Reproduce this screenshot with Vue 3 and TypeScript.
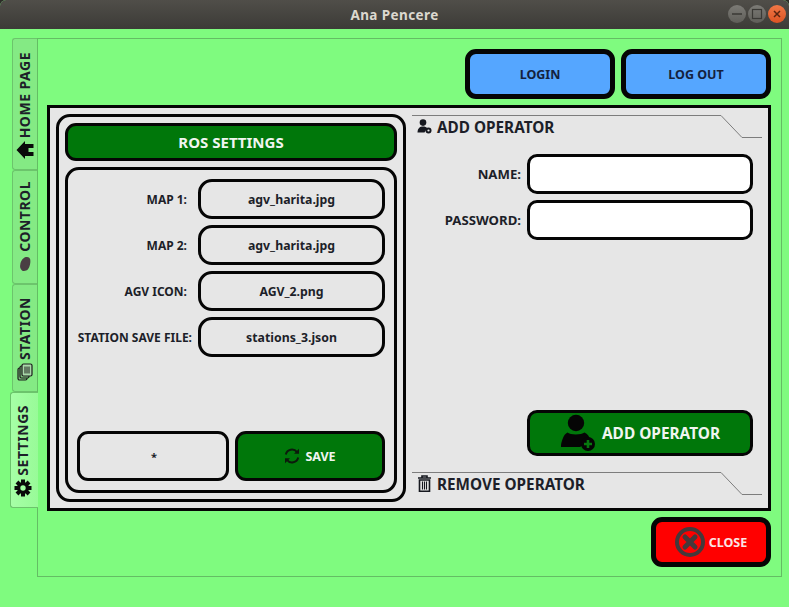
<template>
  <div class="window">
    <header class="titlebar">
      <span class="title">Ana Pencere</span>
      <div class="controls">
        <span class="ctl">
          <svg width="18" height="18" viewBox="0 0 18 18"><path d="M4 9h10" stroke="#3a3935" stroke-width="1.5" /></svg>
        </span>
        <span class="ctl">
          <svg width="18" height="18" viewBox="0 0 18 18"><rect x="4.5" y="4.5" width="9" height="9" fill="none" stroke="#3a3935" stroke-width="1.2" /></svg>
        </span>
        <span class="ctl ctl-close">
          <svg width="18" height="18" viewBox="0 0 18 18"><path d="M6 6l6 6M12 6l-6 6" stroke="#5a2410" stroke-width="1.5" /></svg>
        </span>
      </div>
    </header>

    <div class="content">
      <nav class="tabs">
        <div
          v-for="tab in tabs"
          :key="tab.label"
          class="tab"
          :class="{ active: tab.active }"
          :style="{ height: tab.height + 'px' }"
        >
          <span class="tab-label">{{ tab.label }}</span>
          <span class="tab-icon">
            <svg v-if="tab.icon === 'home'" width="18" height="18" viewBox="0 0 18 18">
              <path d="M9 0.5L18 9h-3v8.5h-4v-5H7v5H3V9H0z" fill="#0a0a0a" transform="rotate(-90 9 9)" />
            </svg>
            <svg v-else-if="tab.icon === 'control'" width="18" height="18" viewBox="0 0 18 18">
              <path d="M10 2c2.600-.4 4 .8 4.300 2.800.4 2.700-.4 7.200-2.300 9.400-1.300 1.500-4.200 2.300-6 1.200C4 14 3.800 11.500 4.300 9.300 4.900 6 7 2.500 10 2z" fill="#4a3f43" />
            </svg>
            <svg v-else-if="tab.icon === 'station'" width="18" height="18" viewBox="0 0 18 18">
              <g fill="#7fc47f" stroke="#1c1c1c" stroke-width="1.2" transform="rotate(-90 9 9)">
                <rect x="1" y="2" width="12" height="9" rx="1.500" />
                <rect x="3" y="4" width="12" height="9" rx="1.500" />
                <rect x="5" y="6" width="12" height="10" rx="1.500" fill="#a9d8a9" />
                <path d="M7.500 9h7M7.500 11h7M7.500 13h7" stroke-width="1" />
              </g>
            </svg>
            <svg v-else width="18" height="18" viewBox="0 0 18 18">
              <g fill="#0a0a0a">
                <circle cx="9" cy="9" r="6" />
                <rect v-for="a in [0, 45, 90, 135, 180, 225, 270, 315]" :key="a" x="7" y="0.5" width="4" height="4" :transform="`rotate(${a} 9 9)`" />
              </g>
              <circle cx="9" cy="9" r="2.700" fill="#a0ffa0" />
            </svg>
          </span>
        </div>
      </nav>

      <main class="pane">
        <div class="top-actions">
          <button class="btn blue">LOGIN</button>
          <button class="btn blue">LOG OUT</button>
        </div>

        <section class="frame">
          <div class="ros-group">
            <div class="ros-title">ROS SETTINGS</div>
            <div class="ros-panel">
              <div v-for="row in rows" :key="row.label" class="ros-row">
                <span class="ros-label" :class="{ wide: row.wide }">{{ row.label }}</span>
                <div class="ros-field">{{ row.value }}</div>
              </div>
              <div class="ros-actions">
                <div class="ros-field star">*</div>
                <button class="save">
                  <svg width="16" height="16" viewBox="0 0 16 16">
                    <g fill="none" stroke="#0c1a0c" stroke-width="2">
                      <path d="M1.800 6.500A6.300 6.300 0 0 1 13 4.200" />
                      <path d="M14.200 9.500A6.300 6.300 0 0 1 3 11.800" />
                    </g>
                    <path d="M15 0.800v5h-5zM1 15.200v-5h5z" fill="#0c1a0c" />
                  </svg>
                  SAVE
                </button>
              </div>
            </div>
          </div>

          <div class="operators">
            <div class="section-head">
              <svg class="head-line" width="350" height="23" viewBox="0 0 350 23">
                <path d="M0 .5H309L330 22.500H350" fill="none" stroke="#7d7d7d" />
              </svg>
              <svg width="15" height="15" viewBox="0 0 15 15">
                <circle cx="6" cy="3.600" r="3.300" fill="#16181f" />
                <path d="M0.500 13C1 8.600 3 7.400 6 7.400c2 0 3.400.5 4.300 1.600L7.500 13.500H.500z" fill="#16181f" />
                <circle cx="11.500" cy="11.500" r="3" fill="#16181f" />
                <circle cx="11.500" cy="11.500" r="1.100" fill="#e6e6e6" />
              </svg>
              <span>ADD OPERATOR</span>
            </div>

            <div class="op-form">
              <label class="op-row">
                <span class="op-label">NAME:</span>
                <input class="op-input" type="text" />
              </label>
              <label class="op-row">
                <span class="op-label">PASSWORD:</span>
                <input class="op-input" type="password" />
              </label>
            </div>

            <button class="add-btn">
              <svg width="36" height="38" viewBox="0 0 36 38">
                <circle cx="16" cy="9" r="8.200" fill="#050505" />
                <path d="M1 31c1-5 2.500-10.500 6.500-12.500 2.500 2.500 14 2.500 17 0 3 1.500 5 4 6 8L20 33H1z" fill="#050505" />
                <circle cx="28" cy="30" r="7" fill="#050505" />
                <path d="M28 26v8M24 30h8" stroke="#067a0e" stroke-width="2.600" />
              </svg>
              <span>ADD OPERATOR</span>
            </button>

            <div class="section-head last">
              <svg class="head-line" width="350" height="23" viewBox="0 0 350 23">
                <path d="M0 .5H309L330 22.500H350" fill="none" stroke="#7d7d7d" />
              </svg>
              <svg width="15" height="17" viewBox="0 0 15 17">
                <path d="M5 2.500V1h5v1.500M1 3h13" fill="none" stroke="#16181f" stroke-width="1.600" />
                <path d="M2.500 5h10v11.200h-10z" fill="none" stroke="#16181f" stroke-width="1.600" />
                <path d="M5.500 6.500v8M7.500 6.500v8M9.500 6.500v8" stroke="#16181f" stroke-width="1.100" />
              </svg>
              <span>REMOVE OPERATOR</span>
            </div>
          </div>
        </section>

        <div class="bottom-actions">
          <button class="btn red">
            <svg width="30" height="30" viewBox="0 0 30 30">
              <circle cx="15" cy="15" r="13" fill="none" stroke="#45383a" stroke-width="4" />
              <path d="M10 10l10 10M20 10L10 20" stroke="#45383a" stroke-width="5" stroke-linecap="round" />
            </svg>
            <span>CLOSE</span>
          </button>
        </div>
      </main>
    </div>
  </div>
</template>

<script setup lang="ts">
type Tab = {
  label: string;
  icon: "home" | "control" | "station" | "settings";
  height: number;
  active?: boolean;
};

type Row = {
  label: string;
  value: string;
  wide?: boolean;
};

const tabs: Tab[] = [
  { label: "HOME PAGE", icon: "home", height: 132 },
  { label: "CONTROL", icon: "control", height: 114 },
  { label: "STATION", icon: "station", height: 108 },
  { label: "SETTINGS", icon: "settings", height: 116, active: true },
];

const rows: Row[] = [
  { label: "MAP 1:", value: "agv_harita.jpg" },
  { label: "MAP 2:", value: "agv_harita.jpg" },
  { label: "AGV ICON:", value: "AGV_2.png" },
  { label: "STATION SAVE FILE:", value: "stations_3.json", wide: true },
];
</script>

<style>
html,
body {
  margin: 0;
  background: #2c2b28;
}
</style>

<style scoped>
.window {
  width: 789px;
  height: 607px;
  display: flex;
  flex-direction: column;
  overflow: hidden;
  border-radius: 6px 6px 0 0;
  background: #7ffb7f;
  color: #1d1f29;
  font-family: "Noto Sans", "Open Sans", sans-serif;
  font-weight: 700;
  font-size: 12.300px;
}

.titlebar {
  height: 29px;
  flex: none;
  position: relative;
  display: flex;
  align-items: center;
  justify-content: center;
  background: linear-gradient(#504e49, #3c3b37);
}

.title {
  color: #dcd8cf;
  font-size: 13.500px;
  letter-spacing: 0.4px;
}

.controls {
  position: absolute;
  right: 3px;
  top: 5px;
  display: flex;
  gap: 2px;
}

.ctl {
  width: 18px;
  height: 18px;
  border-radius: 50%;
  background: linear-gradient(#7c7b76, #5f5e59);
}

.ctl svg {
  display: block;
}

.ctl-close {
  background: linear-gradient(#f07746, #dc5424);
}

.content {
  flex: 1;
  display: flex;
  padding: 9px 7px 30px 10px;
  min-height: 0;
}

.tabs {
  width: 27px;
  flex: none;
  display: flex;
  flex-direction: column;
  position: relative;
  z-index: 1;
}

.tab {
  box-sizing: border-box;
  width: 25px;
  margin-left: 2px;
  display: flex;
  flex-direction: column;
  align-items: center;
  justify-content: flex-end;
  gap: 3px;
  padding-bottom: 10px;
  padding-right: 1px;
  background: #84ea84;
  border: 1px solid #6cc46c;
  border-right: none;
  border-radius: 3px 0 0 3px;
}

.tab.active {
  width: 28px;
  margin-left: 0;
  padding-right: 3px;
  background: linear-gradient(90deg, #a6ffa6, #98fb98);
}

.tab-label {
  writing-mode: vertical-rl;
  transform: rotate(180deg);
  font-size: 14px;
  letter-spacing: 0.5px;
  line-height: 1;
  white-space: nowrap;
}

.tab-icon {
  height: 18px;
}

.tab-icon svg {
  display: block;
}

.pane {
  flex: 1;
  box-sizing: border-box;
  border: 1px solid #64bd64;
  padding: 10px 10px 9px 9px;
  display: flex;
  flex-direction: column;
  gap: 6px;
}

.top-actions,
.bottom-actions {
  height: 50px;
  flex: none;
  display: flex;
  justify-content: flex-end;
  gap: 6px;
}

.btn {
  box-sizing: border-box;
  width: 150px;
  height: 50px;
  border: 5px solid #050505;
  border-radius: 11px;
  font: inherit;
  font-size: 12.500px;
  color: #14213d;
  padding: 0;
}

.blue {
  background: #55a6ff;
}

.red {
  width: 120px;
  background: #ff0000;
  color: #fbe4e4;
  display: flex;
  align-items: center;
  justify-content: center;
  gap: 4px;
}

.frame {
  height: 406px;
  flex: none;
  box-sizing: border-box;
  border: 3px solid #050505;
  background: #e6e6e6;
  padding: 6px;
  display: flex;
  gap: 6px;
}

.ros-group {
  width: 350px;
  box-sizing: border-box;
  border: 3px solid #050505;
  border-radius: 14px;
  padding: 6px;
  display: flex;
  flex-direction: column;
  gap: 6px;
}

.ros-title {
  height: 38px;
  flex: none;
  box-sizing: border-box;
  border: 3px solid #050505;
  border-radius: 11px;
  background: #00770a;
  color: #f0f5f0;
  font-size: 15px;
  display: flex;
  align-items: center;
  justify-content: center;
}

.ros-panel {
  flex: 1;
  box-sizing: border-box;
  border: 3px solid #050505;
  border-radius: 14px;
  padding: 9px;
  display: flex;
  flex-direction: column;
  gap: 6px;
}

.ros-row {
  display: grid;
  grid-template-columns: 115px 187px;
  column-gap: 6px;
  align-items: center;
}

.ros-label {
  text-align: right;
  padding-right: 5px;
  white-space: nowrap;
  font-size: 12px;
}

.ros-label.wide {
  padding-right: 0;
}

.ros-field {
  box-sizing: border-box;
  height: 40px;
  border: 3px solid #050505;
  border-radius: 14px;
  display: flex;
  align-items: center;
  justify-content: center;
}

.ros-actions {
  margin-top: auto;
  display: grid;
  grid-template-columns: 152px 150px;
  column-gap: 6px;
}

.star {
  height: 50px;
  border-radius: 11px;
  font-size: 11px;
  padding-left: 2px;
}

.save {
  height: 50px;
  box-sizing: border-box;
  border: 3px solid #050505;
  border-radius: 11px;
  background: #00770a;
  color: #f0f5f0;
  font: inherit;
  font-size: 12.500px;
  display: flex;
  align-items: center;
  justify-content: center;
  gap: 5px;
  padding: 0;
}

.operators {
  width: 350px;
  display: flex;
  flex-direction: column;
  padding-top: 1px;
  padding-bottom: 7px;
}

.section-head {
  position: relative;
  height: 23px;
  flex: none;
  display: flex;
  align-items: center;
  gap: 5px;
  padding-left: 5px;
  font-size: 15.300px;
}

.section-head.last {
  margin-top: 16px;
}

.head-line {
  position: absolute;
  left: 0;
  top: 0;
}

.op-form {
  margin-top: 16px;
  display: flex;
  flex-direction: column;
  gap: 6px;
}

.op-row {
  display: grid;
  grid-template-columns: 109px 226px;
  column-gap: 6px;
  align-items: center;
}

.op-label {
  text-align: right;
  font-size: 13.200px;
}

.op-input {
  box-sizing: border-box;
  width: 226px;
  height: 40px;
  border: 3px solid #050505;
  border-radius: 10px;
  background: #fff;
  outline: none;
  padding: 0 8px;
}

.add-btn {
  margin-top: auto;
  margin-left: 115px;
  width: 226px;
  height: 46px;
  flex: none;
  box-sizing: border-box;
  border: 3px solid #050505;
  border-radius: 10px;
  background: #00770a;
  color: #f0f5f0;
  font: inherit;
  font-size: 15.400px;
  display: flex;
  align-items: center;
  justify-content: center;
  gap: 6px;
  padding: 0;
}
</style>
